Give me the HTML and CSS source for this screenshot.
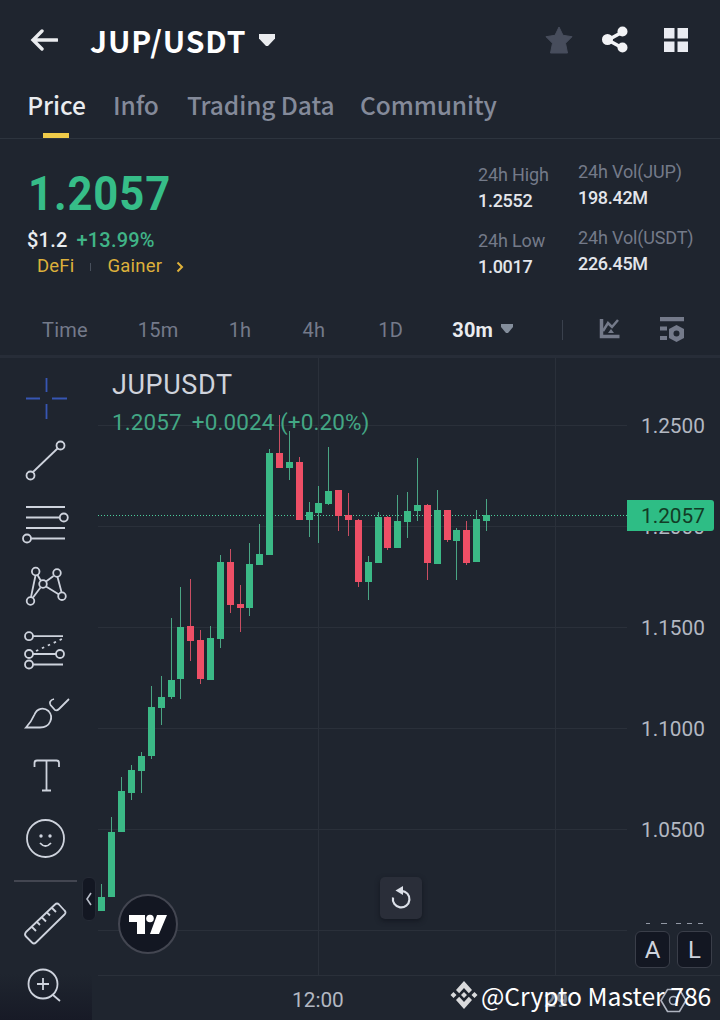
FILE: index.html
```html
<!DOCTYPE html>
<html lang="en">
<head>
<meta charset="utf-8">
<title>JUP/USDT</title>
<link rel="stylesheet" href="styles.css">
</head>
<body>
<main class="screen">
  <header class="topbar">
    <svg class="back" width="28" height="22" viewBox="0 0 28 22"><path d="M12 2L3 11l9 9M4 11h23" fill="none" stroke="#eaecef" stroke-width="3.400" stroke-linecap="round"/></svg>
    <h1 class="pair">JUP/USDT</h1>
    <svg class="pair-caret" width="18" height="14" viewBox="0 0 18 14"><path d="M1 1h16v4.500L10 13H8L1 5.500z" fill="#eaecef"/></svg>
    <div class="actions">
      <svg width="28" height="28" viewBox="0 0 28 28"><path d="M14 1l4 8.300 9 1.400-6.500 6.500 2 9.800H5.500l2-9.800L1 10.700l9-1.400z" fill="#474d5c" stroke="#474d5c" stroke-linejoin="round"/></svg>
      <svg width="28" height="28" viewBox="0 0 28 28"><path d="M21.500 6L7 14l14.500 8" fill="none" stroke="#f2f3f6" stroke-width="3.600"/><g fill="#f2f3f6"><circle cx="21.500" cy="5.500" r="5"/><circle cx="6.500" cy="13.500" r="5.500"/><circle cx="21.500" cy="21.500" r="5"/></g></svg>
      <svg width="26" height="26" viewBox="0 0 26 26"><path d="M1 1h10.500v10.500H1zM14.500 1H25v10.500H14.500zM1 14.500h10.500V25H1zM14.500 14.500H25V25H14.500z" fill="#eaecf2"/></svg>
    </div>
  </header>

  <nav class="tabs">
    <span class="tab tab-price active">Price</span>
    <span class="tab tab-info">Info</span>
    <span class="tab tab-trading">Trading Data</span>
    <span class="tab tab-community">Community</span>
  </nav>

  <section class="summary">
    <div class="quote">
      <div class="last">1.2057</div>
      <div class="change"><span class="fiat">$1.2</span><span class="pct">+13.99%</span></div>
      <div class="tags"><span>DeFi</span><i class="tag-sep"></i><span>Gainer</span><svg width="8" height="12" viewBox="0 0 8 12"><path d="M1.500 1.500L6 6l-4.500 4.500" fill="none" stroke="#e0b23a" stroke-width="2"/></svg></div>
    </div>
    <dl class="stats stats-range">
      <dt>24h High</dt><dd>1.2552</dd>
      <dt>24h Low</dt><dd>1.0017</dd>
    </dl>
    <dl class="stats stats-volume">
      <dt>24h Vol(JUP)</dt><dd>198.42M</dd>
      <dt>24h Vol(USDT)</dt><dd>226.45M</dd>
    </dl>
  </section>

  <nav class="intervals">
    <span class="iv">Time</span><span class="iv">15m</span><span class="iv">1h</span><span class="iv">4h</span><span class="iv">1D</span>
    <span class="iv selected">30m <svg width="12" height="9" viewBox="0 0 12 9"><path d="M0 0h12v3L7 9H5L0 3z" fill="#848e9c"/></svg></span>
    <i class="iv-sep"></i>
    <svg width="22" height="22" viewBox="0 0 22 22"><path d="M2.500 1v17.500H20.500" fill="none" stroke="#747a8a" stroke-width="3.500"/><path d="M4 13l5-8 4 4 6-7" fill="none" stroke="#747a8a" stroke-width="2.500"/><path d="M9 15l3-4 3 4z" fill="#747a8a"/></svg>
    <svg width="26" height="26" viewBox="0 0 26 26"><path d="M1 1h24v4.200H1zM1 10.500h7v4H1zM1 20h7v4H1z" fill="#747a8a"/><path fill-rule="evenodd" d="M17.500 9L25 13v9l-7.500 4L10 22v-9zM17.500 14.500a3 3 0 1 0 0 6 3 3 0 0 0 0-6z" fill="#747a8a"/></svg>
  </nav>

  <section class="workspace">
    <aside class="tools">
      <svg viewBox="0 358 92 662" width="92" height="662" fill="none" stroke="#ced3dd" stroke-width="1.800">
        <path d="M46.500 378v14M46.500 404v15M26 398.500h14M52 398.500h15" stroke="#3756b3"/>
        <path d="M33 472L58 448"/><circle cx="30.500" cy="475.500" r="4"/><circle cx="60.500" cy="445.500" r="4"/>
        <path d="M26 507h39M26 517.500h33.500M26 528h39M31 538.500h34"/><circle cx="63.800" cy="517.500" r="4"/><circle cx="27" cy="538.500" r="4"/>
        <path d="M35.500 575.500L31 597M37.500 575l3.500 6M33 597.500l7.500-10M46 581.500l7.500-5.500M46 586.500l13 8M57.500 577l4 15"/>
        <circle cx="35.700" cy="571.500" r="3.800"/><circle cx="57" cy="573" r="3.800"/><circle cx="43" cy="584" r="3.800"/><circle cx="30.500" cy="601" r="3.800"/><circle cx="62" cy="596.200" r="3.800"/>
        <path d="M33 636.200h30M33 654h23M33 664.500h30"/><path d="M36 651L62 639" stroke-dasharray="2.500 4"/>
        <circle cx="29" cy="636.200" r="4"/><circle cx="29" cy="654" r="4"/><circle cx="60" cy="654" r="4"/><circle cx="29" cy="664.500" r="4"/>
        <path d="M26 727.500C31 722 33 718 34.500 714.500C37 708 44 707 48.500 711C54 717 50.500 727.500 40 727.500zM54 699C50 700 49 703 50.500 705L55 710Q57 711 59 709L69 699"/>
        <path d="M34.500 767v-4q0-2.500 2.500-2.500h19.500q2.500 0 2.500 2.500v4M46.500 761v29.500M42 790.500h9"/>
        <circle cx="45.500" cy="838.500" r="18.500"/><path d="M40 843q5.500 6 11 0"/><circle cx="41" cy="836" r="1.700" fill="#ced3dd" stroke="none"/><circle cx="50" cy="836" r="1.700" fill="#ced3dd" stroke="none"/>
        <path d="M14 881h63" stroke="#434651" stroke-width="2"/>
        <path d="M26 932L55 904.500q2-2 4 0l5.500 6q2 2 0 4L36 942.500q-2 2-4 0l-6-6q-2-2 0-4.500zM32 927l4 4M37 922l3 3M42 917.500l4 4M47 912.500l3 3M52 908l4 4"/>
        <circle cx="43" cy="984" r="14.500"/><path d="M37 984h12M43 978v12M53 995l7 6"/>
      </svg>
    </aside>

    <div class="chart">
      <svg class="plot" viewBox="92 358 628 662" width="628" height="662">
        <path d="M98 425.500h529M98 526.500h529M98 627.500h529M98 728.500h529M98 829.500h529M98 930.500h529M98 975.500h622M318.500 358v618M555.500 358v618" stroke="#2a303a"/>
        <path d="M98 515.500h529" stroke="#4ccf9c" stroke-dasharray="1 2"/>
        <g fill="none">
          <path stroke="#4aa584" d="M101.500 884V911M111.500 817V897M121.500 777V832M131.500 765V800M141.500 752V793M151.500 686V759M161.500 676V725M171.500 618V699M180.500 587V699M210.500 626V680M220.500 555V648M249.500 543V616M259.500 524V565M269.500 449V555M289.500 431V480M309.500 502V537M318.500 486V543M328.500 447V505M368.500 556V600M378.500 512V563M397.500 495V548M407.500 492V538M417.500 458V521M437.500 490V564M456.500 528V580M476.500 510V562M486.500 499V531"/>
          <path stroke="#c94e62" d="M190.500 579V661M200.500 630V684M230.500 549V613M240.500 585V632M279.500 415V468M299.500 457V520M338.500 490V531M348.500 493V536M358.500 519V587M387.500 516V550M427.500 504V580M447.500 510V542M466.500 521V565"/>
          <path stroke="#3bb986" stroke-width="7" d="M101.500 897V911M111.500 832V897M121.500 791V832M131.500 770V793M141.500 756V771M151.500 707V756M161.500 697V708M171.500 680V697M180.500 627V679M210.500 638V680M220.500 562V639M249.500 564V608M259.500 554V565M269.500 453V555M289.500 462V468M309.500 512V520M318.500 503V513M328.500 491V504M368.500 562V582M378.500 517V563M397.500 521V548M407.500 511V522M417.500 505V511M437.500 510V564M456.500 530V541M476.500 519V562M486.500 515V521"/>
          <path stroke="#ee4f66" stroke-width="7" d="M190.500 626V641M200.500 640V679M230.500 562V605M240.500 604V608M279.500 453V468M299.500 462V520M338.500 490V516M348.500 515V520M358.500 520V582M387.500 517V548M427.500 505V563M447.500 510V540M466.500 530V563"/>
        </g>
        <g class="axis">
          <text x="641" y="433">1.2500</text><text x="641" y="534">1.2000</text><text x="641" y="635">1.1500</text><text x="641" y="736">1.1000</text><text x="641" y="837">1.0500</text>
          <text x="292" y="1007">12:00</text><text class="day" x="544" y="1007">29</text>
        </g>
        <path d="M646 923.500h4M661 923.500h6M676 923.500h5M687 923.500h5M698 923.500h5" stroke="#9298a4"/>
        <path d="M627 500h84q3 0 3 3v25q0 3-3 3h-84z" fill="#2ebd85"/>
        <text class="price-tag" x="641" y="523">1.2057</text>
        <g fill="none" stroke="#aeb4c0" stroke-width="1.600"><path d="M667.500 989.500h12l6.500 11-6.500 11h-12l-6.500-11z"/><circle cx="673.500" cy="1000.500" r="4"/></g>
      </svg>
      <div class="legend">
        <div class="symbol">JUPUSDT</div>
        <div class="ohlc"><span>1.2057</span><span>+0.0024 (+0.20%)</span></div>
      </div>
      <div class="collapse"><svg width="8" height="14" viewBox="0 0 8 14"><path d="M6 1L2 7l4 6" fill="none" stroke="#b9bec9" stroke-width="1.600"/></svg></div>
      <div class="tv-logo"><svg width="40" height="22" viewBox="0 0 40 22" fill="#fff"><path d="M1 1h16v19H9V8H1zM29 1h10l-8 19h-9z"/><circle cx="22" cy="4.500" r="3.800"/></svg></div>
      <div class="reset"><svg width="24" height="24" viewBox="0 0 24 24"><path d="M4 11.500A8.300 8.300 0 1 0 12.500 4.800" fill="none" stroke="#dce0e8" stroke-width="2.200"/><path d="M14 0v9L6.500 4.500z" fill="#dce0e8"/></svg></div>
      <div class="scale"><span>A</span><span>L</span></div>
      <div class="watermark"><svg width="28" height="28" viewBox="0 0 28 28" fill="#d9dadc"><path d="M6 9l8-9 8 9-3.200 3.200L14 7l-4.800 5.200zM6 19l8 9 8-9-3.200-3.200L14 21l-4.800-5.200zM.5 14l3-3 3 3-3 3zM21.500 14l3-3 3 3-3 3zM11 14l3-3 3 3-3 3z"/></svg><span>@Crypto Master 786</span></div>
    </div>
  </section>
</main>
</body>
</html>
```
FILE: styles.css
```css
* { box-sizing: border-box; }
body { margin: 0; background: #1f252f; font-family: Roboto, "Liberation Sans", sans-serif; }
svg { display: block; flex: none; }
.screen { width: 720px; height: 1020px; overflow: hidden; background: #1f252f; color: #eaecef; white-space: nowrap; }

.topbar { display: flex; align-items: center; height: 80px; padding: 0 31px 0 30px; }
.pair { margin: -1px 0 0 32px; width: 154px; font: 700 30px/40px "Noto Sans CJK SC", sans-serif; letter-spacing: 0.9px; color: #fff; }
.pair-caret { margin-left: 14px; }
.actions { display: flex; align-items: center; gap: 28px; margin-left: auto; }
.actions svg:last-child { margin-left: 6px; }

.tabs { display: flex; height: 59px; padding: 7px 27px 0; border-bottom: 1px solid #2d343e; font: 500 24.500px/36px "Noto Sans CJK SC", sans-serif; letter-spacing: -0.1px; color: #848a9a; }
.tab-info { width: 74px; }
.tab-trading { width: 173px; }
.tab-price.active { display: flex; flex-direction: column; align-items: center; width: 59px; margin-right: 27px; color: #eaecef; }
.tab-price.active::after { content: ""; width: 26px; height: 5px; margin: 10px 1px 0 0; background: #f0cb49; }

.summary { display: flex; height: 165px; padding-left: 27px; }
.quote { width: 451px; padding-top: 27px; }
.last { margin-left: 1px; font: 700 49px/56px Roboto, sans-serif; letter-spacing: 1px; color: #36bd88; transform: scaleX(0.89); transform-origin: left; }
.change { display: flex; gap: 9px; margin-top: 4px; font-size: 20px; line-height: 28px; font-weight: 500; letter-spacing: 0.2px; }
.pct { color: #40b487; }
.tags { display: flex; align-items: center; margin-left: 10px; font: 18.500px/25px Roboto, sans-serif; letter-spacing: 0.2px; color: #ddb03b; }
.tag-sep { width: 1px; height: 8px; margin: 0 16px; background: #48505c; }
.tags svg { margin-left: 14px; }
.stats { margin: 0; font-size: 18px; line-height: 26px; letter-spacing: -0.15px; }
.stats dt { color: #747a89; }
.stats dd { margin: 0 0 14px; font-weight: 500; letter-spacing: -0.3px; color: #e3e6eb; }
.stats-range { width: 100px; padding-top: 23px; }
.stats-volume { padding-top: 20px; }

.intervals { display: flex; align-items: center; height: 54px; padding: 0 35px 0 42px; border-bottom: 3px solid #272d38; font: 20px/28px Roboto, sans-serif; letter-spacing: 0.2px; color: #747a8a; }
.iv { padding-top: 1px; }
.iv:nth-child(1) { width: 96px; }
.iv:nth-child(2) { width: 91px; }
.iv:nth-child(3) { width: 74px; }
.iv:nth-child(4) { width: 76px; }
.iv:nth-child(5) { width: 74px; }
.selected { display: flex; align-items: center; gap: 8px; width: 110px; color: #eaecef; font-weight: 700; }
.selected svg { margin-top: -3px; }
.iv-sep { width: 1px; height: 20px; margin-right: 36px; background: #3a414d; }
.intervals > svg { margin-top: -1px; }
.intervals > svg + svg { margin-left: 38px; }

.workspace { display: flex; height: 662px; }
.tools { width: 92px; background: linear-gradient(#1f252f 93%, #171a26); }
.chart { position: relative; width: 628px; }
.axis { font: 20.800px Roboto, sans-serif; fill: #b3b8c2; }
.axis .day { font-weight: 700; fill: #7d8593; }
.price-tag { font: 20.800px Roboto, sans-serif; fill: #123c26; }
.legend { position: absolute; left: 20px; top: 11px; }
.symbol { font-size: 27px; line-height: 32px; letter-spacing: 0.6px; color: #cfd3dc; }
.ohlc { display: flex; gap: 10px; margin-top: 7px; font-size: 22.500px; line-height: 28px; letter-spacing: 0.1px; color: #43a785; }
.collapse { position: absolute; left: -10px; top: 519px; display: grid; place-items: center; width: 14px; height: 44px; border: 1px solid #252a35; border-radius: 6px; background: #131722; }
.tv-logo { position: absolute; left: 26px; top: 536px; display: grid; place-items: center; width: 60px; height: 60px; border: 2px solid #434651; border-radius: 50%; background: #131722; }
.tv-logo svg { margin-top: 2px; }
.reset { position: absolute; left: 288px; top: 519px; display: grid; place-items: center; width: 42px; height: 42px; border-radius: 5px; background: #2a2e39; box-shadow: 0 2px 5px #141821; }
.scale { position: absolute; left: 543px; top: 573px; display: flex; gap: 7px; }
.scale span { display: grid; place-items: center; width: 35px; height: 37px; border: 1px solid #3a3e49; border-radius: 6px; background: #131722; font-size: 24px; color: #ced3dd; }
.watermark { position: absolute; left: 358px; top: 620px; display: flex; align-items: center; gap: 3px; font: 24.700px/34px "Noto Sans CJK SC", sans-serif; color: #fff; }
```
